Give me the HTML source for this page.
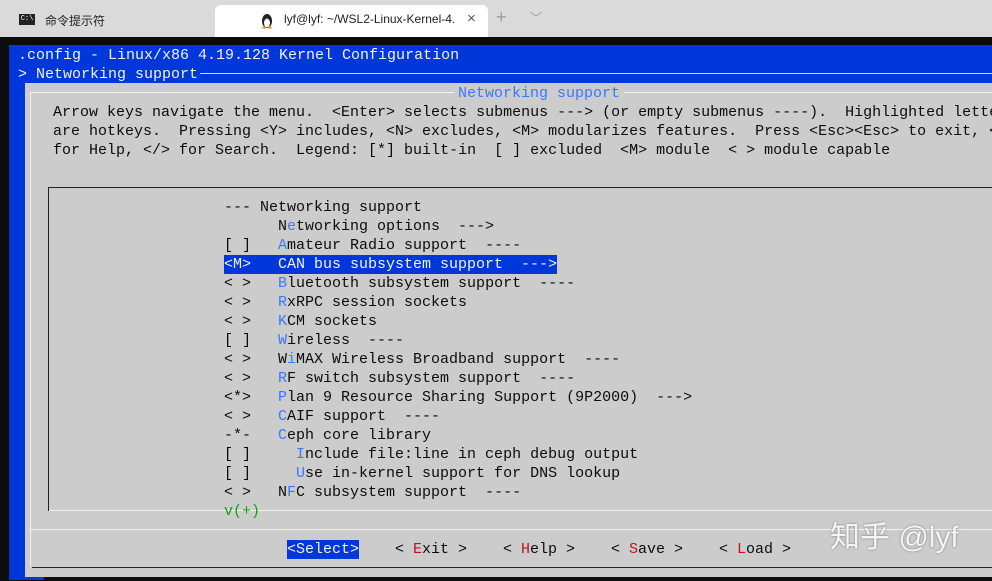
<!DOCTYPE html>
<html><head><meta charset="utf-8"><style>
*{margin:0;padding:0;box-sizing:border-box}
body{width:992px;height:580px;overflow:hidden;background:#0c0c0c;position:relative;font-family:"Liberation Mono","DejaVu Sans Mono",monospace;font-size:15px}
.tabbar{position:absolute;left:0;top:0;width:992px;height:37px;background:#dadada;font-family:"Liberation Sans","Noto Sans CJK SC",sans-serif;font-size:12px;color:#222}
.tab2{position:absolute;left:215px;top:5px;width:273px;height:32px;background:#fff;border-radius:6px 6px 0 0}
.abs{position:absolute}
.blue{position:absolute;left:9px;top:45px;width:983px;height:532px;background:#0037da}
.gray{position:absolute;left:25px;top:83px;width:967px;height:494px;background:#cccccc}
.l{position:absolute;white-space:pre;line-height:19px;height:19px;color:#0c0c0c}
.w{color:#f2f2f2}.h{color:#3b78ff}.r{color:#c50f1f}.g{color:#13a10e}
.sel{background:#0037da;color:#f2f2f2}
#t{position:absolute;left:0;top:1px;width:992px;height:580px}
</style></head><body>
<div class="tabbar">
 <div class="abs" style="left:19px;top:14px;width:16px;height:11px;background:#222;color:#fff;font-size:7px;line-height:11px;text-align:center;font-family:'Liberation Mono',monospace">C:\</div>
 <div class="abs" style="left:45px;top:12px">命令提示符</div>
 <div class="abs" style="left:224px;top:10px;font-size:15px;color:#555">×</div>
 <div class="tab2">
  <svg class="abs" style="left:44px;top:7px" width="16" height="18" viewBox="0 0 16 18"><ellipse cx="8" cy="9" rx="5" ry="7" fill="#222"/><ellipse cx="8" cy="11" rx="3" ry="4.5" fill="#fff"/><path d="M2 16 L6 14 L6 17Z M14 16 L10 14 L10 17Z" fill="#e8a317"/></svg>
  <div class="abs" style="left:69px;top:7px">lyf@lyf: ~/WSL2-Linux-Kernel-4.</div>
  <div class="abs" style="left:252px;top:5px;font-size:15px;color:#555">×</div>
 </div>
 <div class="abs" style="left:496px;top:7px;font-size:18px;color:#999">+</div>
 <div class="abs" style="left:530px;top:9px;font-size:12px;color:#999">﹀</div>
</div>
<div class="blue"></div>
<div class="abs" style="left:9px;top:577px;width:35px;height:3px;background:#0037da"></div>
<div class="abs" style="left:200px;top:73px;width:792px;height:1px;background:#c8d4ff"></div>
<div class="gray"></div>
<div class="abs" style="left:30px;top:92px;width:1px;height:475px;background:#f2f2f2"></div>
<div class="abs" style="left:30px;top:92px;width:424px;height:1px;background:#f2f2f2"></div>
<div class="abs" style="left:624px;top:92px;width:368px;height:1px;background:#f2f2f2"></div>
<div class="abs" style="left:32px;top:567px;width:960px;height:1px;background:#222"></div>
<div class="abs" style="left:48px;top:187px;width:944px;height:1px;background:#222"></div>
<div class="abs" style="left:48px;top:187px;width:1px;height:324px;background:#222"></div>
<div class="abs" style="left:49px;top:510px;width:943px;height:1px;background:#f2f2f2"></div>
<div class="abs" style="left:31px;top:529px;width:961px;height:1px;background:#f2f2f2"></div>
<div id="t">
<div class="l w" style="left:18px;top:45px">.config - Linux/x86 4.19.128 Kernel Configuration</div>
<div class="l w" style="left:18px;top:64px">&gt; Networking support</div>
<div class="l h" style="left:458px;top:83px">Networking support</div>
<div class="l" style="left:53px;top:102px">Arrow keys navigate the menu.  &lt;Enter&gt; selects submenus ---&gt; (or empty submenus ----).  Highlighted letters</div>
<div class="l" style="left:53px;top:121px">are hotkeys.  Pressing &lt;Y&gt; includes, &lt;N&gt; excludes, &lt;M&gt; modularizes features.  Press &lt;Esc&gt;&lt;Esc&gt; to exit, &lt;?&gt;</div>
<div class="l" style="left:53px;top:140px">for Help, &lt;/&gt; for Search.  Legend: [*] built-in  [ ] excluded  &lt;M&gt; module  &lt; &gt; module capable</div>

<div class="l" style="left:224px;top:197px">--- Networking support</div>
<div class="l" style="left:224px;top:216px">      N<span class="h">e</span>tworking options  ---&gt;</div>
<div class="l" style="left:224px;top:235px">[ ]   <span class="h">A</span>mateur Radio support  ----</div>
<div class="l sel" style="left:224px;top:254px">&lt;M&gt;   CAN bus subsystem support  ---&gt;</div>
<div class="l" style="left:224px;top:273px">&lt; &gt;   <span class="h">B</span>luetooth subsystem support  ----</div>
<div class="l" style="left:224px;top:292px">&lt; &gt;   <span class="h">R</span>xRPC session sockets</div>
<div class="l" style="left:224px;top:311px">&lt; &gt;   <span class="h">K</span>CM sockets</div>
<div class="l" style="left:224px;top:330px">[ ]   <span class="h">W</span>ireless  ----</div>
<div class="l" style="left:224px;top:349px">&lt; &gt;   W<span class="h">i</span>MAX Wireless Broadband support  ----</div>
<div class="l" style="left:224px;top:368px">&lt; &gt;   <span class="h">R</span>F switch subsystem support  ----</div>
<div class="l" style="left:224px;top:387px">&lt;*&gt;   <span class="h">P</span>lan 9 Resource Sharing Support (9P2000)  ---&gt;</div>
<div class="l" style="left:224px;top:406px">&lt; &gt;   <span class="h">C</span>AIF support  ----</div>
<div class="l" style="left:224px;top:425px">-*-   <span class="h">C</span>eph core library</div>
<div class="l" style="left:224px;top:444px">[ ]     <span class="h">I</span>nclude file:line in ceph debug output</div>
<div class="l" style="left:224px;top:463px">[ ]     <span class="h">U</span>se in-kernel support for DNS lookup</div>
<div class="l" style="left:224px;top:482px">&lt; &gt;   N<span class="h">F</span>C subsystem support  ----</div>
<div class="l g" style="left:224px;top:501px">v(+)</div>

<div class="l sel" style="left:287px;top:539px">&lt;Select&gt;</div>
<div class="l" style="left:395px;top:539px">&lt; <span class="r">E</span>xit &gt;</div>
<div class="l" style="left:503px;top:539px">&lt; <span class="r">H</span>elp &gt;</div>
<div class="l" style="left:611px;top:539px">&lt; <span class="r">S</span>ave &gt;</div>
<div class="l" style="left:719px;top:539px">&lt; <span class="r">L</span>oad &gt;</div>
</div>
<div class="abs" style="left:830px;top:512px;font-family:'Liberation Sans','Noto Sans CJK SC',sans-serif;font-size:30px;color:#f4f4f4;text-shadow:0 0 2px #777;white-space:nowrap">知乎 @lyf</div>
</body></html>
